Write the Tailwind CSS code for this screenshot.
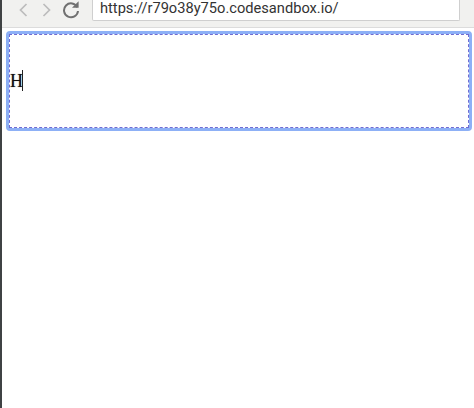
<!DOCTYPE html>
<html>
<head>
<meta charset="utf-8">
<script src="https://cdn.jsdelivr.net/npm/@tailwindcss/browser@4"></script>
</head>
<body class="m-0 bg-white">
<div class="flex h-[408px] w-[474px] overflow-hidden bg-white">
  <div class="h-full w-[2px] shrink-0 bg-[#3f4244]"></div>
  <div class="flex min-w-0 flex-1 flex-col">
    <header class="flex h-[28px] shrink-0 items-start border-b border-[#dcdcdc] bg-[#f1f1ef]">
      <div class="flex h-[20px] w-[90px] shrink-0 items-center">
        <svg class="ml-[15px] h-[16px] w-[12px]" viewBox="0 0 12 16" fill="none" stroke="#bcbcbc" stroke-width="1.7"><path d="M9.5 2 3.5 8l6 6"/></svg>
        <svg class="ml-[12px] h-[16px] w-[12px]" viewBox="0 0 12 16" fill="none" stroke="#bcbcbc" stroke-width="1.7"><path d="M2.5 2l6 6-6 6"/></svg>
        <svg class="ml-[9px] -mt-[2px] h-[19px] w-[18px]" viewBox="0 0 18 19" fill="none" stroke="#707070" stroke-width="2"><path d="M15.3 7.2A7 7 0 1 0 16 11"/><path d="M16.6 1.2v6.6H10" fill="#707070" stroke="none"/></svg>
      </div>
      <div class="flex h-[21px] w-[368px] items-end rounded-br-[2px] rounded-bl-[2px] border border-t-0 border-[#cfcfcf] bg-white pb-[2px] pl-[7px] font-['Roboto',sans-serif] text-[14.65px] leading-[19px] text-[#333]">https://r79o38y75o.codesandbox.io/</div>
    </header>
    <main class="pt-[3px] pl-[4px]">
      <div class="h-[100px] w-[466px] rounded-[4px] border-[3px] border-[#8db0f6]">
        <div class="flex h-full items-center border border-dashed border-[#6f6bd2] pb-[1px] font-['Liberation_Serif',serif] text-[18px] leading-[24px] text-[#111] [text-shadow:0_0_1px_#777]">
          <span>H</span><span class="-ml-px h-[21px] w-px bg-[#222]"></span>
        </div>
      </div>
    </main>
  </div>
</div>
</body>
</html>
